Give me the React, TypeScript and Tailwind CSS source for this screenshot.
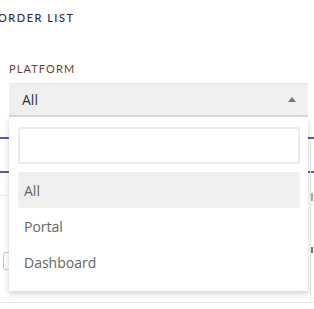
import React, { useState } from 'react';

const options = ['All', 'Portal', 'Dashboard'];

const App: React.FC = () => {
  const [selected, setSelected] = useState('All');
  const [query, setQuery] = useState('');

  const filtered = options.filter(o => o.toLowerCase().includes(query.toLowerCase()));

  return (
    <div className="relative w-[314px] h-[309px] overflow-hidden bg-white font-['Open_Sans',sans-serif]">
      {/* Page header */}
      <div className="pt-[11px] -ml-[2px] h-[62px]">
        <h1 className="text-[11px] leading-[13px] tracking-[1.5px] text-[#2b2a45] font-['Lato',sans-serif] font-medium">
          ORDER LIST
        </h1>
      </div>

      {/* Filter field */}
      <div className="pl-[9px] pr-[6px]">
        <label className="block text-[11px] leading-[13px] tracking-[1.1px] text-[#7a3b30] font-['Lato',sans-serif] mb-[8px]">
          PLATFORM
        </label>
        <button className="w-full h-[34px] flex items-center justify-between bg-[#efefef] border-t border-[#e4e4e4] border-b-2 border-b-[#dcdcdc] pl-[13px] pr-[12px] text-left">
          <span className="text-[14px] text-[#333]">{selected}</span>
          <span className="w-0 h-0 border-l-[4px] border-r-[4px] border-b-[5px] border-l-transparent border-r-transparent border-b-[#777]" />
        </button>
      </div>

      {/* Content behind the dropdown */}
      <div className="relative">
        <div className="mt-[20px] h-[2px] w-full bg-[#6b4fb3]" />
        <div className="mt-[32px] h-[2px] w-full bg-[#6b4fb3]" />
        <div className="mt-[22px] h-px w-full bg-[#ececec]" />
        <div className="mt-[56px] ml-[3px] w-[10px] h-[18px] rounded-[3px] border border-[#c8c8c8]" />
        <div className="absolute right-0 top-[6px] w-[4px] h-[160px] border-l border-[#ececec]">
          <div className="mt-[50px] h-[8px] w-[2px] bg-[#aaa]" />
          <div className="mt-[46px] h-[6px] w-[2px] bg-[#777]" />
        </div>
        <div className="mt-[32px] h-px w-full bg-[#e6e6e6]" />
      </div>

      {/* Dropdown panel */}
      <div className="absolute left-[9px] top-[117px] w-[299px] bg-white shadow-[0_3px_6px_rgba(0,0,0,0.18)] pt-[10px] pl-[9px] pr-[8px] pb-[11px]">
        <input
          value={query}
          onChange={e => setQuery(e.target.value)}
          className="block w-full h-[37px] border-2 border-[#ececec] rounded-[3px] px-2 text-[14px] text-[#333] outline-none"
        />
        <ul className="mt-[8px]">
          {filtered.map(o => (
            <li
              key={o}
              onClick={() => setSelected(o)}
              className={`h-[36px] flex items-center pl-[6px] rounded-[3px] text-[14px] text-[#666] cursor-pointer ${
                o === selected ? 'bg-[#efefef]' : ''
              }`}
            >
              {o}
            </li>
          ))}
        </ul>
      </div>
    </div>
  );
};

export default App;
